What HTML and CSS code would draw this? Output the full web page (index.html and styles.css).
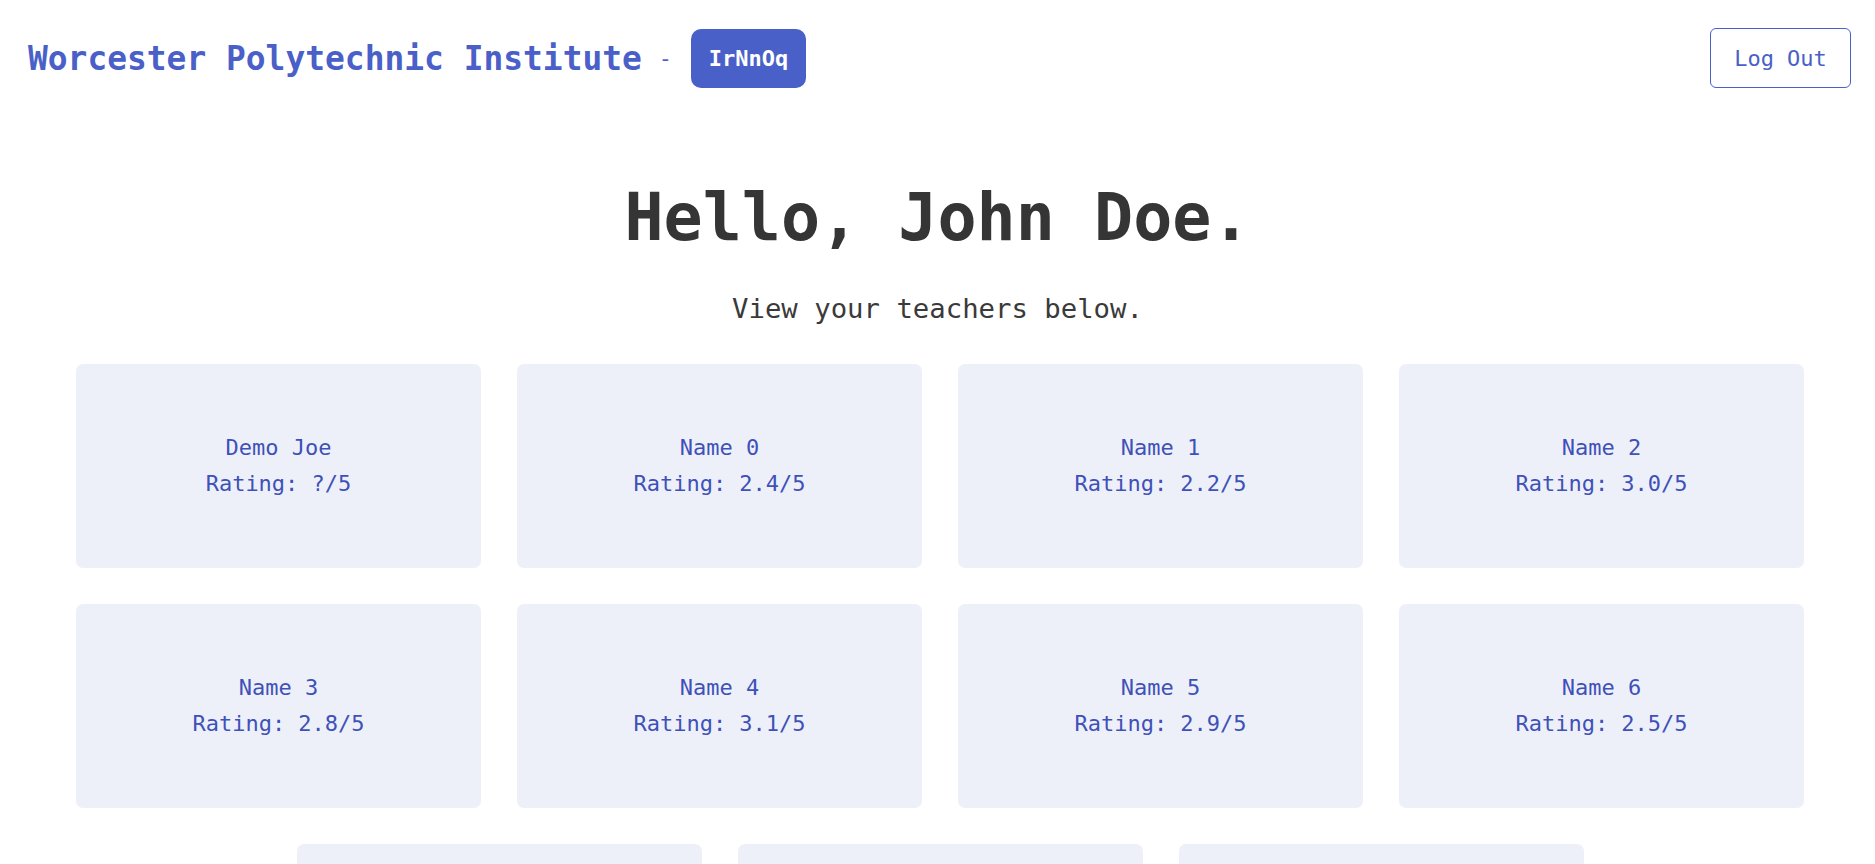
FILE: index.html
```html
<!DOCTYPE html>
<html lang="en">
<head>
<meta charset="utf-8">
<title>Teachers</title>
<link rel="stylesheet" href="styles.css">
</head>
<body>
<header class="topbar">
  <div class="brand">
    <span class="school">Worcester Polytechnic Institute</span>
    <span class="dash">-</span>
    <span class="code">IrNnOq</span>
  </div>
  <button class="logout">Log Out</button>
</header>
<main class="main">
  <h1 class="hello">Hello, John Doe.</h1>
  <p class="sub">View your teachers below.</p>
  <section class="cards">
    <div class="card"><div>Demo Joe</div><div>Rating: ?/5</div></div>
    <div class="card"><div>Name 0</div><div>Rating: 2.4/5</div></div>
    <div class="card"><div>Name 1</div><div>Rating: 2.2/5</div></div>
    <div class="card"><div>Name 2</div><div>Rating: 3.0/5</div></div>
    <div class="card"><div>Name 3</div><div>Rating: 2.8/5</div></div>
    <div class="card"><div>Name 4</div><div>Rating: 3.1/5</div></div>
    <div class="card"><div>Name 5</div><div>Rating: 2.9/5</div></div>
    <div class="card"><div>Name 6</div><div>Rating: 2.5/5</div></div>
    <div class="card"><div>Name 7</div><div>Rating: 2.7/5</div></div>
    <div class="card"><div>Name 8</div><div>Rating: 3.2/5</div></div>
    <div class="card"><div>Name 9</div><div>Rating: 2.6/5</div></div>
  </section>
</main>
</body>
</html>
```

FILE: styles.css
```css
html, body {
  margin: 0;
  padding: 0;
  background: #ffffff;
}
body {
  font-family: "DejaVu Sans Mono", "Liberation Mono", monospace;
  color: #333333;
}
.topbar {
  display: flex;
  justify-content: space-between;
  align-items: center;
  padding: 28px 24px 0 28px;
}
.brand {
  display: flex;
  align-items: center;
  height: 59px;
}
.school {
  font-size: 32.9px;
  font-weight: bold;
  color: #4a5fc8;
}
.dash {
  font-size: 22px;
  color: #4a5fc8;
  margin: 0 19px 0 17px;
}
.code {
  display: flex;
  align-items: center;
  justify-content: center;
  width: 115px;
  height: 59px;
  box-sizing: border-box;
  background: #4a60c9;
  color: #ffffff;
  font-size: 22px;
  font-weight: bold;
  border-radius: 10px;
}
.logout {
  width: 141px;
  height: 60px;
  box-sizing: border-box;
  background: #ffffff;
  border: 1px solid #4a60c9;
  border-radius: 6px;
  color: #4a5fc8;
  font-family: "DejaVu Sans Mono", "Liberation Mono", monospace;
  font-size: 22px;
  padding: 0;
}
.main {
  display: flex;
  flex-direction: column;
  align-items: center;
}
.hello {
  margin: 92px 0 0;
  font-size: 65px;
  line-height: 76px;
  font-weight: bold;
  color: #353535;
}
.sub {
  margin: 37px 0 0;
  font-size: 27.3px;
  line-height: 32px;
  color: #3a3a3a;
}
.cards {
  margin: 39px 0 0 5px;
  width: 1730px;
  display: flex;
  flex-wrap: wrap;
  justify-content: center;
  gap: 36px 36px;
}
.card {
  width: 405px;
  height: 204px;
  background: #eef0f9;
  border-radius: 7px;
  display: flex;
  flex-direction: column;
  align-items: center;
  justify-content: center;
  font-size: 22px;
  line-height: 36px;
  color: #3e51b8;
}
```
